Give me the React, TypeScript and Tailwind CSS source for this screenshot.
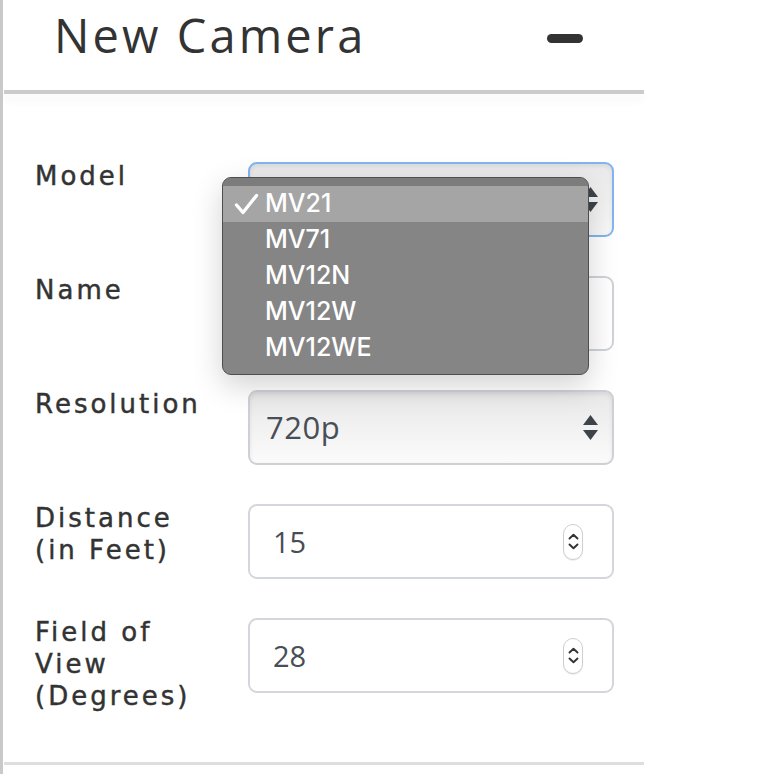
import React from "react";

const font = { fontFamily: '"Open Sans", "Liberation Sans", sans-serif' };

function Arrows() {
  return (
    <svg width="15" height="26" viewBox="0 0 15 26" className="shrink-0">
      <path d="M7.5 0 L15 10 L0 10 Z" fill="#3d434b" />
      <path d="M0 15 L15 15 L7.5 25 Z" fill="#3d434b" />
    </svg>
  );
}

function Spinner() {
  return (
    <div className="w-[20px] h-[36px] rounded-full border border-[#cfcfcf] bg-white flex flex-col items-center justify-center gap-[3px] shadow-[0_1px_1px_rgba(0,0,0,0.08)]">
      <svg width="11" height="7" viewBox="0 0 11 7">
        <path d="M1.5 5.5 L5.5 1.8 L9.5 5.5" stroke="#333333" strokeWidth="1.9" fill="none" strokeLinecap="round" strokeLinejoin="round" />
      </svg>
      <svg width="11" height="7" viewBox="0 0 11 7">
        <path d="M1.5 1.5 L5.5 5.2 L9.5 1.5" stroke="#333333" strokeWidth="1.9" fill="none" strokeLinecap="round" strokeLinejoin="round" />
      </svg>
    </div>
  );
}

function Label({ children }: { children: React.ReactNode }) {
  return (
    <div
      className="w-[245px] pl-[32px] -mt-[2px] text-[26px] leading-[32px] tracking-[3px] text-[#333333] [-webkit-text-stroke:0.45px_#333333]"
      style={{ fontFamily: '"DejaVu Sans", "Open Sans", sans-serif' }}
    >
      {children}
    </div>
  );
}

export default function App() {
  const items = ["MV21", "MV71", "MV12N", "MV12W", "MV12WE"];
  return (
    <div className="w-[764px] h-[774px] bg-white relative overflow-hidden" style={font}>
      <div className="w-[644px] h-full border-l-[3px] border-[#c9c9c9] flex flex-col">
        <div className="h-[90px] flex items-center justify-between pl-[51px] pr-[61px]">
          <div className="text-[47px] leading-[54px] text-[#333333] tracking-[3.1px] -mt-[20px]">New Camera</div>
          <div className="w-[36px] h-[9px] rounded-full bg-[#333333] -mt-[14px]" />
        </div>
        <div className="ml-[1px] h-[4px] bg-[#cbcbcb] shadow-[0_6px_10px_rgba(0,0,0,0.06)]" />
        <div className="pt-[68px] flex flex-col gap-[39px]">
          <div className="flex items-start">
            <Label>Model</Label>
            <div className="w-[366px] h-[75px] rounded-[9px] border-2 border-[#80b4f0] bg-gradient-to-b from-[#e9e9e9] to-[#f9f9f9] shadow-[inset_0_2px_4px_rgba(0,0,0,0.08)] flex items-center justify-end pr-[14px]">
              <Arrows />
            </div>
          </div>
          <div className="flex items-start">
            <Label>Name</Label>
            <div className="w-[366px] h-[75px] rounded-[9px] border-2 border-[#cfd3d8] bg-white" />
          </div>
          <div className="flex items-start">
            <Label>Resolution</Label>
            <div className="w-[366px] h-[75px] rounded-[9px] border-2 border-[#cdd1d6] bg-gradient-to-b from-[#e8e8e8] to-[#fbfbfb] shadow-[inset_0_2px_4px_rgba(0,0,0,0.08)] flex items-center justify-between pl-[16px] pr-[14px]">
              <span className="text-[31px] tracking-[0.5px] text-[#484e56]">720p</span>
              <Arrows />
            </div>
          </div>
          <div className="flex items-start">
            <Label>
              Distance
              <br />
              (in Feet)
            </Label>
            <div className="w-[366px] h-[75px] rounded-[9px] border-2 border-[#d3d6da] bg-white flex items-center justify-between pl-[23px] pr-[29px]">
              <span className="text-[29px] text-[#484e56]">15</span>
              <Spinner />
            </div>
          </div>
          <div className="flex items-start">
            <Label>
              Field of
              <br />
              View
              <br />
              (Degrees)
            </Label>
            <div className="w-[366px] h-[75px] rounded-[9px] border-2 border-[#d3d6da] bg-white flex items-center justify-between pl-[23px] pr-[29px]">
              <span className="text-[29px] text-[#484e56]">28</span>
              <Spinner />
            </div>
          </div>
        </div>
        <div className="mt-[50px] ml-[1px] h-[3px] bg-[#dedede]" />
      </div>

      <div
        className="absolute left-[222px] top-[177px] w-[367px] h-[198px] rounded-[9px] border border-[#4e4e4e] bg-[#858585] pt-[8px] pb-[8px] shadow-[0_10px_30px_rgba(0,0,0,0.18)] overflow-hidden"
        style={{ fontFamily: 'Inter, "Liberation Sans", sans-serif' }}
      >
        <div className="absolute left-0 right-0 top-0 h-[8px] bg-[#7c7c7c]" />
        {items.map((it, i) => (
          <div
            key={it}
            className={
              "relative h-[36px] flex items-center pl-[42px] text-[25px] font-medium text-white " +
              (i === 0 ? "bg-[#a5a5a5]" : "")
            }
          >
            {i === 0 && (
              <svg className="absolute left-[11px] top-[7px]" width="25" height="22" viewBox="0 0 25 22">
                <path d="M2.5 12 L9 19.5 L22.5 2.5" stroke="white" strokeWidth="3.4" fill="none" strokeLinecap="round" strokeLinejoin="round" />
              </svg>
            )}
            {it}
          </div>
        ))}
      </div>
    </div>
  );
}
